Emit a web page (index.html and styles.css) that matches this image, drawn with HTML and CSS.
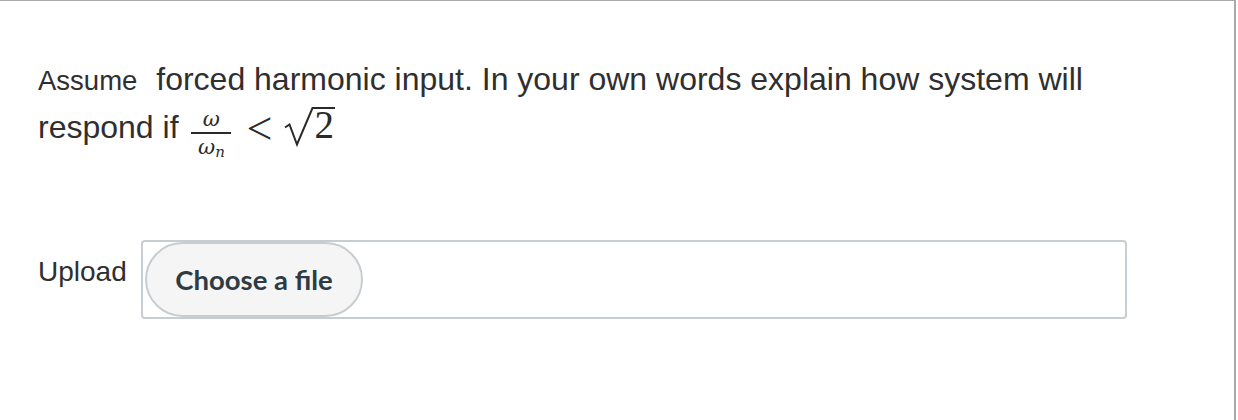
FILE: index.html
```html
<!DOCTYPE html>
<html>
<head>
<meta charset="utf-8">
<link rel="stylesheet" href="styles.css">
</head>
<body>
<div class="panel">
  <div class="question">
    <p class="line"><span class="small">Assume</span> forced harmonic input. In your own words explain how system will</p>
    <p class="line">respond if <span class="math"><span class="frac"><span class="num">ω</span><span class="bar"></span><span class="den">ω<sub>n</sub></span></span><span class="lt">&lt;</span><span class="sqrt"><svg class="rad" width="30" height="40" viewBox="0 0 30 40"><path d="M1 20.5 L5.5 17.5 L13 37.5 L28.5 1 L30 1" fill="none" stroke="#2a2a2a" stroke-width="2" stroke-linejoin="miter"/></svg><span class="radicand">2</span></span></span></p>
  </div>
  <div class="upload">
    <span class="label">Upload</span>
    <div class="filebox">
      <button class="choose">Choose a file</button>
    </div>
  </div>
</div>
</body>
</html>
```

FILE: styles.css
```css
html, body {
  margin: 0;
  padding: 0;
  background: #fff;
}
.panel {
  box-sizing: border-box;
  width: 1236px;
  height: 420px;
  border-top: 1px solid #a9a9a9;
  border-right: 2px solid #a9a9a9;
  padding: 54px 0 0 38px;
  font-family: "Liberation Sans", Arial, sans-serif;
  color: #2f2f2f;
}
.question {
  margin: 0;
}
.line {
  margin: 0;
  font-size: 32px;
  line-height: 48px;
  height: 48px;
  white-space: nowrap;
}
.small {
  font-size: 27.5px;
  margin-right: 10px;
}
.math {
  display: inline-flex;
  align-items: flex-start;
  height: 48px;
  vertical-align: top;
  font-family: "DejaVu Serif", "Liberation Serif", serif;
  color: #2a2a2a;
  margin-left: 4px;
}
.frac {
  display: flex;
  flex-direction: column;
  align-items: center;
  font-style: italic;
  font-size: 21px;
  line-height: 20px;
  width: 40px;
  margin-top: 6px;
}
.num { display: block; }
.bar {
  display: block;
  width: 40px;
  height: 2px;
  background: #2a2a2a;
  margin: 3px 0 3px;
}
.den { display: block; }
.den sub {
  font-size: 15px;
  line-height: 0;
  vertical-align: -3px;
}
.lt {
  font-family: "Liberation Serif", serif;
  font-size: 46px;
  margin: 6px 12px 0 15px;
  line-height: 40px;
}
.sqrt {
  display: flex;
  align-items: flex-start;
  margin-top: 4px;
}
.rad {
  display: block;
}
.radicand {
  border-top: 2px solid #2a2a2a;
  padding: 0 1px 0 0;
  font-family: "Liberation Serif", serif;
  font-size: 39px;
  line-height: 32px;
  height: 38px;
}
.upload {
  display: flex;
  align-items: flex-start;
  margin-top: 89px;
}
.label {
  font-size: 28px;
  line-height: 32px;
  padding-top: 16px;
  width: 103px;
}
.filebox {
  box-sizing: border-box;
  width: 986px;
  height: 79px;
  border: 2px solid #c8cdd1;
  border-radius: 4px;
  padding: 0 0 0 2px;
  display: flex;
  align-items: center;
}
.choose {
  box-sizing: border-box;
  height: 75px;
  width: 218px;
  border: 2px solid #c8cdd1;
  border-radius: 38px;
  background: #f5f5f5;
  font-family: Lato, "Liberation Sans", sans-serif;
  font-weight: 700;
  font-size: 27.5px;
  color: #2d3b45;
  padding: 0;
}
```
